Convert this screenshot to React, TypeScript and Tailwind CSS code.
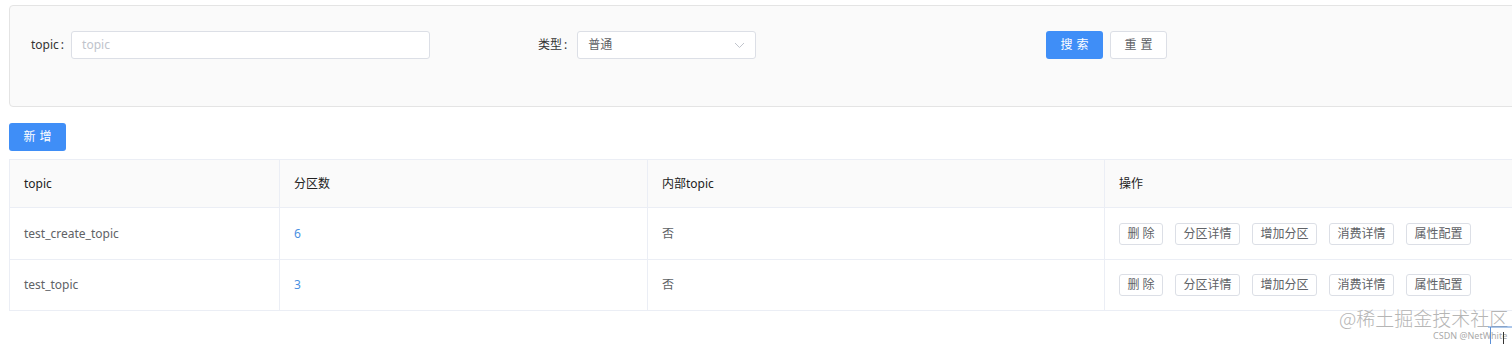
import React from "react";

const font = { fontFamily: '"Noto Sans", "Noto Sans CJK SC", sans-serif' };

function ActionBtn({ label, narrow }: { label: string; narrow?: boolean }) {
  return (
    <button
      className={`h-[22px] ${narrow ? "w-[44px] tracking-[3px] pl-[3px]" : "w-[65px]"} border border-[#dcdfe6] rounded-[3px] bg-white text-[12px] text-[#606266] leading-none flex items-center justify-center`}
    >
      {label}
    </button>
  );
}

function Actions() {
  return (
    <div className="flex items-center gap-[12px]">
      <ActionBtn label="删除" narrow />
      <ActionBtn label="分区详情" />
      <ActionBtn label="增加分区" />
      <ActionBtn label="消费详情" />
      <ActionBtn label="属性配置" />
    </div>
  );
}

const rows = [
  { topic: "test_create_topic", parts: "6", internal: "否" },
  { topic: "test_topic", parts: "3", internal: "否" },
];

export default function App() {
  return (
    <div className="w-[1512px] h-[344px] overflow-hidden bg-white relative" style={font}>
      {/* search panel */}
      <div className="ml-[9px] mt-[5px] w-[1515px] h-[102px] bg-[#fafafa] border border-[#e4e4e4] rounded-[4px] pl-[21px] pt-[25px]">
        <div className="flex items-center">
          <div className="w-[507px] flex items-center">
            <span className="text-[12px] text-[#333] mr-[7px]">
              topic<span className="ml-[2px]">:</span>
            </span>
            <div className="w-[359px] h-[28px] bg-white border border-[#dcdfe6] rounded-[3px] flex items-center px-[10px]">
              <span className="text-[12px] text-[#c0c4cc]">topic</span>
            </div>
          </div>
          <div className="w-[508px] flex items-center">
            <span className="text-[12px] text-[#333] mr-[10px]">
              类型<span className="ml-[2px]">:</span>
            </span>
            <div className="w-[179px] h-[28px] bg-white border border-[#dcdfe6] rounded-[3px] flex items-center justify-between pl-[10px] pr-[10px]">
              <span className="text-[12px] text-[#606266]">普通</span>
              <svg width="11" height="7" viewBox="0 0 11 7" fill="none">
                <path d="M1 1l4.5 4.5L10 1" stroke="#c0c4cc" strokeWidth="1" />
              </svg>
            </div>
          </div>
          <div className="flex items-center gap-[7px]">
            <button className="w-[57px] h-[28px] rounded-[3px] bg-[#3f8ef7] text-white text-[12px] tracking-[4px] pl-[4px]">
              搜索
            </button>
            <button className="w-[57px] h-[28px] rounded-[3px] bg-white border border-[#dcdfe6] text-[#606266] text-[12px] tracking-[4px] pl-[4px]">
              重置
            </button>
          </div>
        </div>
      </div>

      {/* add button */}
      <button className="ml-[9px] mt-[16px] w-[57px] h-[28px] rounded-[3px] bg-[#3f8ef7] text-white text-[12px] tracking-[4px] pl-[4px] block">
        新增
      </button>

      {/* table */}
      <div className="ml-[9px] mt-[8px] w-[1515px] border border-[#ebeef5] border-b-0">
        <div className="flex h-[48px] bg-[#fafafa] border-b border-[#ebeef5] text-[12px] text-[#222]">
          <div className="w-[270px] px-[14px] flex items-center border-r border-[#ebeef5]">topic</div>
          <div className="w-[368px] px-[14px] flex items-center border-r border-[#ebeef5]">分区数</div>
          <div className="w-[457px] px-[14px] flex items-center border-r border-[#ebeef5]">内部topic</div>
          <div className="flex-1 px-[14px] flex items-center">操作</div>
        </div>
        {rows.map((r, i) => (
          <div key={r.topic} className={`flex ${i === 0 ? "h-[52px]" : "h-[51px]"} border-b border-[#ebeef5] text-[12px] text-[#606266]`}>
            <div className="w-[270px] px-[14px] flex items-center border-r border-[#ebeef5]">{r.topic}</div>
            <div className="w-[368px] px-[14px] flex items-center border-r border-[#ebeef5] text-[#4a90e2]">{r.parts}</div>
            <div className="w-[457px] px-[14px] flex items-center border-r border-[#ebeef5]">{r.internal}</div>
            <div className="flex-1 px-[14px] flex items-center">
              <Actions />
            </div>
          </div>
        ))}
      </div>

      {/* watermark */}
      <div className="absolute left-[1339px] top-[308px] text-[19px] text-[#b5b5b5] leading-none whitespace-nowrap" style={{ fontFamily: '"Noto Sans CJK SC", sans-serif', fontWeight: 300 }}>
        @稀土掘金技术社区
      </div>
      <div className="absolute left-[1433px] top-[331px] text-[9px] text-[#aaaaaa] leading-none whitespace-nowrap">
        CSDN @NetWhite
      </div>
      <svg className="absolute left-[1488px] top-[320px]" width="24" height="24" viewBox="0 0 24 24" fill="none">
        <path d="M0 7H24" stroke="#5b8fd6" strokeWidth="1" />
        <path d="M2.5 7V24" stroke="#5b8fd6" strokeWidth="1" />
        <path d="M15.5 12V24" stroke="#333" strokeWidth="1" />
      </svg>
    </div>
  );
}
